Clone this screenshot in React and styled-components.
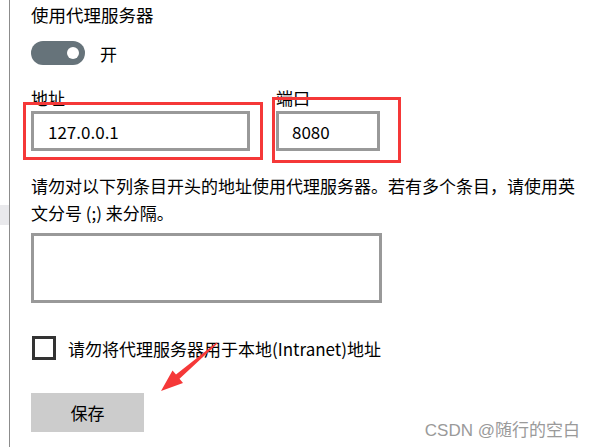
import React from 'react';
import styled, { createGlobalStyle } from 'styled-components';

const GlobalStyle = createGlobalStyle`
  html, body {
    margin: 0;
    padding: 0;
    background: #fff;
  }
  body {
    font-family: "Noto Sans CJK SC", "Noto Sans", sans-serif;
    color: #000;
  }
`;

const Page = styled.div`
  position: relative;
  display: flex;
  width: 594px;
  height: 447px;
  overflow: hidden;
  background: #fff;
`;

const Rail = styled.div`
  flex: 0 0 9px;
  border-right: 1px solid #8c8c8c;
  display: flex;
  flex-direction: column;
  padding-top: 205px;
`;

const RailBand = styled.div`
  height: 20px;
  background: #e9e9ec;
`;

const Content = styled.div`
  flex: 1;
  padding: 3px 0 0 21px;
  display: flex;
  flex-direction: column;
  align-items: flex-start;
  font-size: 17px;
`;

const Title = styled.div`
  font-size: 17.5px;
  line-height: 24px;
`;

const ToggleRow = styled.div`
  display: flex;
  align-items: center;
  gap: 15px;
  margin-top: 14px;
  height: 24px;
`;

const Toggle = styled.div`
  position: relative;
  width: 54px;
  height: 24px;
  border-radius: 12px;
  background: #66737a;
  &::after {
    content: '';
    position: absolute;
    right: 6px;
    top: 6px;
    width: 12px;
    height: 12px;
    border-radius: 50%;
    background: #fff;
  }
`;

const Fields = styled.div`
  display: flex;
  gap: 26px;
  margin-top: 23px;
`;

const Field = styled.div`
  display: flex;
  flex-direction: column;
  gap: 3px;
`;

const Label = styled.div`
  line-height: 20px;
`;

const InputWrap = styled.div`
  position: relative;
`;

const Input = styled.div`
  box-sizing: border-box;
  width: ${p => p.$w}px;
  height: 40px;
  border: 3px solid #999;
  padding-left: ${p => p.$pad}px;
  display: flex;
  align-items: center;
  font-size: 17px;
  background: #fff;
`;

const Highlight = styled.div`
  position: absolute;
  left: ${p => p.$l}px;
  top: ${p => p.$t}px;
  right: ${p => p.$r}px;
  bottom: ${p => p.$b}px;
  border: 3px solid #f53838;
  pointer-events: none;
`;

const Hint = styled.p`
  margin: 21px 0 0;
  line-height: 27px;
  width: 560px;
  white-space: nowrap;
`;

const TextArea = styled.div`
  box-sizing: border-box;
  width: 351px;
  height: 70px;
  border: 3px solid #999;
  margin-top: 7px;
`;

const CheckRow = styled.div`
  display: flex;
  align-items: center;
  gap: 12px;
  margin-top: 33px;
  height: 24px;
`;

const CheckBox = styled.div`
  box-sizing: border-box;
  width: 24px;
  height: 24px;
  border: 3px solid #333;
  margin-left: 1px;
`;

const SaveButton = styled.div`
  margin-top: 33px;
  width: 113px;
  height: 39px;
  background: #ccc;
  display: flex;
  align-items: center;
  justify-content: center;
  font-size: 17px;
`;

const Arrow = styled.svg`
  position: absolute;
  left: 0;
  top: 0;
  pointer-events: none;
`;

const Watermark = styled.div`
  position: absolute;
  right: 14px;
  bottom: 6px;
  font-family: "Liberation Sans", "Noto Sans CJK SC", sans-serif;
  font-size: 17px;
  color: #9a9a9a;
  text-shadow: 0 0 1px #fff;
`;

export default function App() {
  return (
    <Page>
      <GlobalStyle />
      <Rail>
        <RailBand />
      </Rail>
      <Content>
        <Title>使用代理服务器</Title>
        <ToggleRow>
          <Toggle />
          <span>开</span>
        </ToggleRow>
        <Fields>
          <Field>
            <Label>地址</Label>
            <InputWrap>
              <Input $w={219} $pad={14}>127.0.0.1</Input>
              <Highlight $l={-8} $t={-9} $r={-13} $b={-9} />
            </InputWrap>
          </Field>
          <Field>
            <Label>端口</Label>
            <InputWrap>
              <Input $w={104} $pad={13}>8080</Input>
              <Highlight $l={-4} $t={-14} $r={-21} $b={-12} />
            </InputWrap>
          </Field>
        </Fields>
        <Hint>
          请勿对以下列条目开头的地址使用代理服务器。若有多个条目，请使用英
          <br />
          文分号 (;) 来分隔。
        </Hint>
        <TextArea />
        <CheckRow>
          <CheckBox />
          <span>请勿将代理服务器用于本地(Intranet)地址</span>
        </CheckRow>
        <SaveButton>保存</SaveButton>
      </Content>
      <Arrow width="594" height="447" viewBox="0 0 594 447">
        <polygon
          points="161,391 183,383 179.5,378.8 217.5,343.4 216.6,342.6 176,374.6 172.5,370.6"
          fill="#f53838"
        />
      </Arrow>
      <Watermark>CSDN @随行的空白</Watermark>
    </Page>
  );
}
